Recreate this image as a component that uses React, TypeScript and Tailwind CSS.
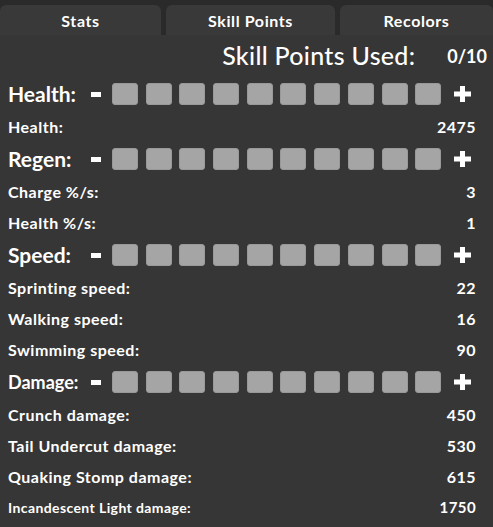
import React from 'react';

type Row =
  | { kind: 'header'; label: string; size: string }
  | { kind: 'stat'; label: string; value: string; small?: boolean };

const rows: Row[] = [
  { kind: 'header', label: 'Health:', size: 'text-[21px]' },
  { kind: 'stat', label: 'Health:', value: '2475' },
  { kind: 'header', label: 'Regen:', size: 'text-[21px]' },
  { kind: 'stat', label: 'Charge %/s:', value: '3' },
  { kind: 'stat', label: 'Health %/s:', value: '1' },
  { kind: 'header', label: 'Speed:', size: 'text-[21px]' },
  { kind: 'stat', label: 'Sprinting speed:', value: '22' },
  { kind: 'stat', label: 'Walking speed:', value: '16' },
  { kind: 'stat', label: 'Swimming speed:', value: '90' },
  { kind: 'header', label: 'Damage:', size: 'text-[18px]' },
  { kind: 'stat', label: 'Crunch damage:', value: '450' },
  { kind: 'stat', label: 'Tail Undercut damage:', value: '530' },
  { kind: 'stat', label: 'Quaking Stomp damage:', value: '615' },
  { kind: 'stat', label: 'Incandescent Light damage:', value: '1750', small: true },
];

function Plus() {
  return (
    <svg width="17" height="16" viewBox="0 0 17 16" className="block">
      <rect x="6" y="0" width="5" height="16" fill="#fff" />
      <rect x="0" y="5.5" width="17" height="5" fill="#fff" />
    </svg>
  );
}

export default function App() {
  return (
    <div
      className="w-[493px] h-[527px] bg-[#363636] text-white overflow-hidden"
      style={{ fontFamily: 'Lato, "Noto Sans", sans-serif' }}
    >
      {/* Tabs */}
      <div className="bg-[#2a2a2a] pt-[5px] flex gap-[5px]">
        {[
          { t: 'Stats', w: 'w-[161px]' },
          { t: 'Skill Points', w: 'w-[169px]' },
          { t: 'Recolors', w: 'flex-1' },
        ].map((tab) => (
          <div
            key={tab.t}
            className={`${tab.w} h-[30px] bg-[#393939] rounded-t-[6px] flex items-center justify-center pt-[1px] text-[16px] tracking-[0.6px] font-bold`}
          >
            {tab.t}
          </div>
        ))}
      </div>

      {/* Points used */}
      <div className="h-[42px] flex items-center justify-end pr-[6px]">
        <span className="text-[25px] font-medium tracking-[0.3px]">Skill Points Used:</span>
        <span className="text-[18px] font-bold ml-[32px]">0/10</span>
      </div>

      {rows.map((r, i) =>
        r.kind === 'header' ? (
          <div key={i} className="h-[34px] flex items-center pl-[8px]">
            <div className={`w-[83px] font-bold ${r.size}`}>{r.label}</div>
            <div className="w-[10px] h-[5px] bg-white" />
            <div className="ml-[11px] flex gap-[7.7px]">
              {Array.from({ length: 10 }).map((_, j) => (
                <div key={j} className="w-[26px] h-[22px] rounded-[3px] bg-[#a5a5a5] border border-[#999]" />
              ))}
            </div>
            <div className="ml-[13px]">
              <Plus />
            </div>
          </div>
        ) : (
          <div
            key={i}
            className={`h-[31px] flex items-center justify-between pl-[8px] pr-[17px] font-bold ${
              r.small ? 'text-[14px] tracking-[0.4px]' : 'text-[16px] tracking-[0.5px]'
            }`}
          >
            <span>{r.label}</span>
            <span className={r.small ? 'text-[15px]' : ''}>{r.value}</span>
          </div>
        )
      )}
    </div>
  );
}
